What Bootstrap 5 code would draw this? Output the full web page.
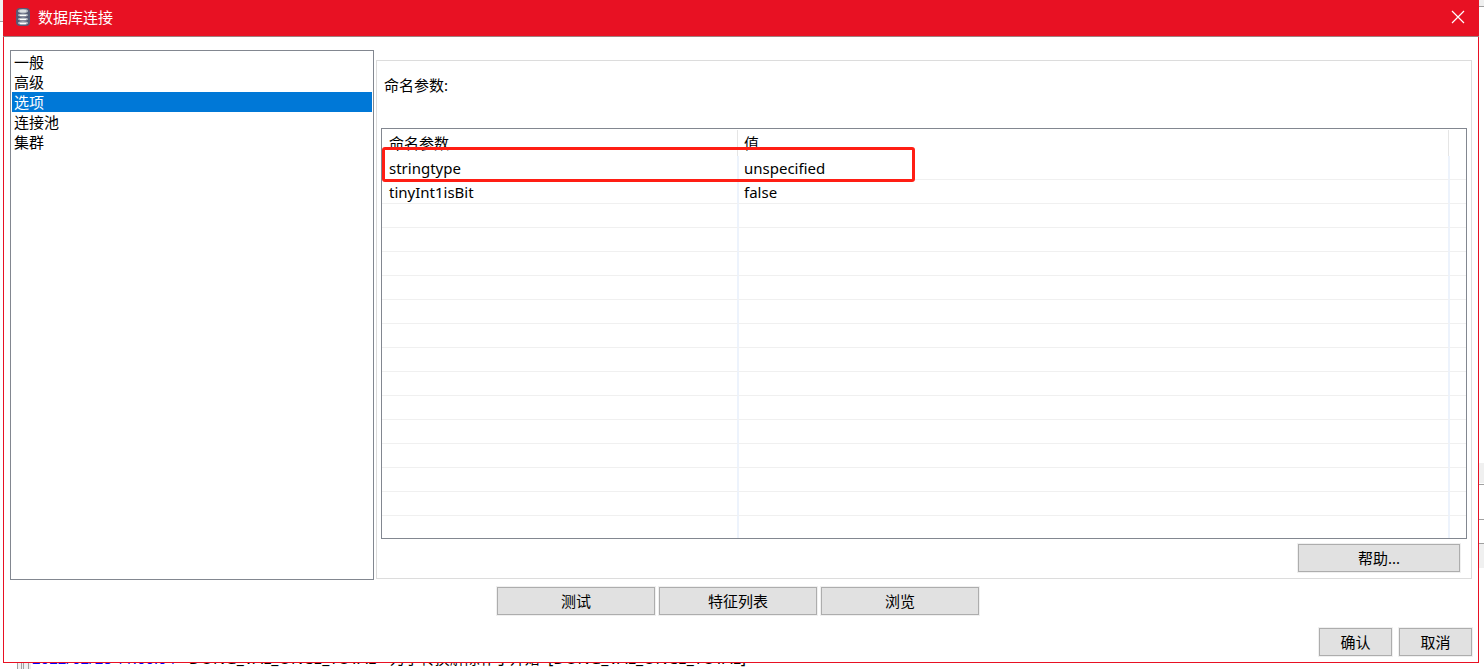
<!DOCTYPE html>
<html lang="zh-CN">
<head>
<meta charset="utf-8">
<meta name="viewport" content="width=device-width, initial-scale=1">
<title>数据库连接</title>
<link href="https://cdn.jsdelivr.net/npm/bootstrap@5.3.0/dist/css/bootstrap.min.css" rel="stylesheet">
<style>
  body { font-family: "Noto Sans", "Noto Sans CJK SC", sans-serif; font-size: 15px; line-height: 20px; color: #000; background: #fff; }
  /* parent window showing round the dialog */
  .edge-left, .edge-right { flex: none; }
  .edge-left { width: 3px; background: linear-gradient(#f0f0f0 21px, #a0a0a0 21px 22px, #fff 22px); }
  .edge-right { width: 5px; background: linear-gradient(#f0f0f0 6px, #a0a0a0 6px 7px, #fff 7px 463px, #f0f0f0 463px 483px, #fff 483px 484px, #a0a0a0 484px 485px, #fff 485px 519px, #a0a0a0 519px 520px, #fff 520px 543px, #a0a0a0 543px 544px, #f0f0f0 544px 568px, #fff 568px); }
  .log-strip { height: 6px; }
  .log-rails { width: 14px; height: 6px; margin: 0 1px 0 17px; background: linear-gradient(90deg, #a0a0a0 1px, #f0f0f0 1px 4px, #a0a0a0 4px 5px, #f0f0f0 5px 6px, #a0a0a0 6px 7px, #f0f0f0 7px 11px, #a0a0a0 11px 12px, #f0f0f0 12px); }
  .log-line { height: 22px; line-height: 22px; font-size: 16px; }
  .log-line time { color: #00f; }
  .log-text { font-size: 15px; }
  .dialog-window { border: 1px solid #e81123; border-top: 0; min-width: 0; }
  .title-bar { height: 37px; margin: 0 -1px; padding: 0 14px 2px 13px; background: #e81123; border-bottom: 1px solid #a08080; color: #fff; }
  .title-close { color: #fff; line-height: 0; }
  .dialog-main { padding: 13px 6px 7px; gap: 2px; }
  .category-list { width: 364px; padding: 1px; border: 1px solid #828790; border-radius: 0; }
  .category-list .list-group-item { margin: 0; padding: 0 2px; border: 0; color: #000; background: #fff; }
  .category-list .list-group-item.active { margin: 0; background: #0078d7; color: #fff; }
  .option-panel { margin-top: 10px; margin-bottom: 1px; padding: 14px 4px 6px; border: 1px solid #dcdcdc; }
  .panel-label { padding-left: 3px; margin-bottom: 33px; }
  .grid-frame { border: 1px solid #828790; }
  .param-grid { table-layout: fixed; border-collapse: separate; border-spacing: 0; }
  .param-grid th, .param-grid td { padding: 0 0 0 7px; font-weight: 400; }
  .param-grid th { height: 27px; background: linear-gradient(#e5e5e5, #e5e5e5) calc(100% - 1px) 1px / 1px 100% no-repeat; }
  .param-grid td { height: 24px; border-right: 2px solid #edf3fc; border-bottom: 1px solid #f0f0f0; }
  .param-grid tr:last-child td { height: 22px; border-bottom: 0; }
  .param-grid th + th, .param-grid td + td { padding-left: 5px; }
  .param-grid th:last-child, .param-grid td:last-child { padding: 0; border-right: 0; background: none; }
  .name-col { width: 357px; }
  .tail-col { width: 16px; }
  .row-marker { left: 0; top: 18px; width: 533px; height: 35px; border: 3px solid #ff1e14; border-radius: 3px; pointer-events: none; }
  .dialog-btn { height: 28px; padding: 0; font-size: 15px; line-height: 20px; color: #000; background: #e1e1e1; border: 1px solid #adadad; border-radius: 0; box-shadow: 0 0 0 1px #f0f0f0; }
  .wide-btn { width: 158px; }
  .small-btn { width: 73px; }
  .help-btn { width: 162px; margin: 5px 7px 0 0; }
  .tool-row { gap: 4px; padding-right: 6px; }
  .answer-row { gap: 7px; padding: 13px 6px 6px; }
</style>
</head>
<body>
<div class="d-flex flex-column vh-100 overflow-hidden">
  <div class="d-flex flex-grow-1">
    <div class="edge-left"></div>
    <main class="dialog-window bg-white d-flex flex-column flex-grow-1">
      <header class="title-bar d-flex align-items-center">
        <svg width="14" height="18" viewBox="0 0 14 18" aria-hidden="true">
          <rect x="0" y="0" width="14" height="18" rx="4" fill="#565b75"/>
          <g fill="#b9bfc6"><ellipse cx="7" cy="3" rx="5" ry="2"/><ellipse cx="7" cy="7" rx="5" ry="1.6"/><ellipse cx="7" cy="11" rx="5" ry="1.6"/><ellipse cx="7" cy="15" rx="5" ry="1.8"/></g>
          <g fill="none" stroke="#fff"><path d="M4 3h6M4 7.500h6M4 11.500h6M4 15.500h6"/></g>
        </svg>
        <span class="ms-2">数据库连接</span>
        <button type="button" class="title-close btn border-0 p-0 ms-auto" aria-label="关闭">
          <svg width="14" height="14" viewBox="0 0 14 14" fill="none" stroke="currentColor" stroke-width="1.2"><path d="M1 1l12 12M13 1L1 13"/></svg>
        </button>
      </header>
      <div class="dialog-main d-flex flex-grow-1">
        <nav class="category-list list-group flex-shrink-0">
          <button type="button" class="list-group-item list-group-item-action">一般</button>
          <button type="button" class="list-group-item list-group-item-action">高级</button>
          <button type="button" class="list-group-item list-group-item-action active" aria-current="true">选项</button>
          <button type="button" class="list-group-item list-group-item-action">连接池</button>
          <button type="button" class="list-group-item list-group-item-action">集群</button>
        </nav>
        <section class="option-panel d-flex flex-column flex-grow-1">
          <div class="panel-label">命名参数:</div>
          <div class="grid-frame position-relative flex-grow-1">
            <table class="param-grid w-100">
              <colgroup><col class="name-col"><col><col class="tail-col"></colgroup>
              <thead><tr><th scope="col">命名参数</th><th scope="col">值</th><th></th></tr></thead>
              <tbody>
                <tr><td>stringtype</td><td>unspecified</td><td></td></tr>
                <tr><td>tinyInt1isBit</td><td>false</td><td></td></tr>
                <tr><td></td><td></td><td></td></tr>
                <tr><td></td><td></td><td></td></tr>
                <tr><td></td><td></td><td></td></tr>
                <tr><td></td><td></td><td></td></tr>
                <tr><td></td><td></td><td></td></tr>
                <tr><td></td><td></td><td></td></tr>
                <tr><td></td><td></td><td></td></tr>
                <tr><td></td><td></td><td></td></tr>
                <tr><td></td><td></td><td></td></tr>
                <tr><td></td><td></td><td></td></tr>
                <tr><td></td><td></td><td></td></tr>
                <tr><td></td><td></td><td></td></tr>
                <tr><td></td><td></td><td></td></tr>
                <tr><td></td><td></td><td></td></tr>
              </tbody>
            </table>
            <div class="row-marker position-absolute"></div>
          </div>
          <button type="button" class="dialog-btn help-btn btn align-self-end">帮助...</button>
        </section>
      </div>
      <div class="tool-row d-flex justify-content-center">
        <button type="button" class="dialog-btn wide-btn btn">测试</button>
        <button type="button" class="dialog-btn wide-btn btn">特征列表</button>
        <button type="button" class="dialog-btn wide-btn btn">浏览</button>
      </div>
      <div class="answer-row d-flex justify-content-end">
        <button type="button" class="dialog-btn small-btn btn">确认</button>
        <button type="button" class="dialog-btn small-btn btn">取消</button>
      </div>
    </main>
    <div class="edge-right"></div>
  </div>
  <div class="log-strip d-flex align-items-end overflow-hidden flex-shrink-0">
    <div class="log-rails"></div>
    <div class="log-line text-nowrap"><time class="log-text">2022/02/28 11:00:04</time> - DONG_VAL_ONCE_TOTAL - <span class="log-text">为了转换解除补丁开始</span>&nbsp; [DONG_VAL_ONCE_TOTAL]</div>
  </div>
</div>
<script src="https://cdn.jsdelivr.net/npm/bootstrap@5.3.0/dist/js/bootstrap.bundle.min.js"></script>
</body>
</html>
